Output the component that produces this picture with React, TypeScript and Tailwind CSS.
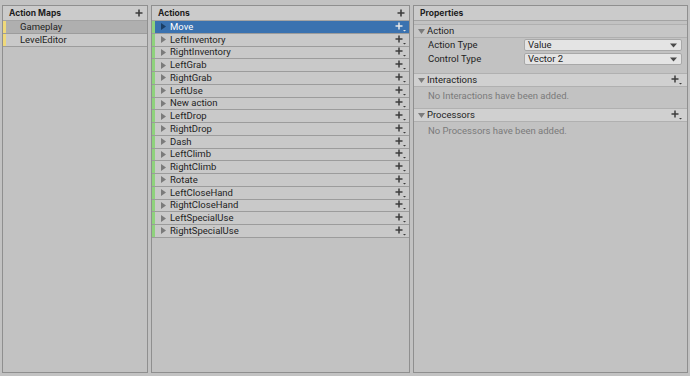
const actions = [
  'Move',
  'LeftInventory',
  'RightInventory',
  'LeftGrab',
  'RightGrab',
  'LeftUse',
  'New action',
  'LeftDrop',
  'RightDrop',
  'Dash',
  'LeftClimb',
  'RightClimb',
  'Rotate',
  'LeftCloseHand',
  'RightCloseHand',
  'LeftSpecialUse',
  'RightSpecialUse',
];

const Plus = ({ color = '#3c3c3c' }: { color?: string }) => (
  <svg width="9" height="9" viewBox="0 0 9 9">
    <path d="M4 0.5v7M0.5 4h7" stroke={color} strokeWidth="1.6" />
  </svg>
);

const PlusMore = ({ color = '#3c3c3c' }: { color?: string }) => (
  <svg width="11" height="10" viewBox="0 0 11 10">
    <path d="M4 0.5v7M0.5 4h7" stroke={color} strokeWidth="1.5" />
    <path d="M8 8h3l-1.5 1.6z" fill={color} />
  </svg>
);

const Arrow = ({ open, color = '#7b7b7b' }: { open?: boolean; color?: string }) => (
  <svg width="7" height="7" viewBox="0 0 7 7">
    {open ? <path d="M0 1h7L3.5 6z" fill={color} /> : <path d="M1 0v7l5-3.5z" fill={color} />}
  </svg>
);

const Caret = () => (
  <svg width="7" height="5" viewBox="0 0 7 5">
    <path d="M0 0.5h7L3.5 4.5z" fill="#4a4a4a" />
  </svg>
);

const PanelHeader = ({ title, plus }: { title: string; plus?: boolean }) => (
  <div className="flex h-[15px] items-center justify-between border-b border-[#a3a3a3] bg-[#cbcbcb] pl-[6px] pr-[3px]">
    <span className="font-['Inter'] text-[8.5px] font-bold text-[#1e1e1e]">{title}</span>
    {plus && <Plus />}
  </div>
);

const Section = ({ title, empty }: { title: string; empty: string }) => (
  <div className="mt-[3px]">
    <div className="flex h-[14px] items-center justify-between border-y border-[#b0b0b0] bg-[#d0d0d0] pl-[4px] pr-[5px]">
      <div className="flex items-center gap-[2px]">
        <Arrow open />
        <span className="text-[9.5px] text-[#1e1e1e]">{title}</span>
      </div>
      <PlusMore />
    </div>
    <div className="h-[18px] pl-[14px] pt-[2px] text-[9.5px] text-[#7a7a7a]">{empty}</div>
  </div>
);

export default function App() {
  return (
    <div
      className="flex h-[376px] w-[690px] gap-[3px] bg-[#c2c2c2] pb-[3px] pl-[2px] pr-[2px] pt-[5px]"
      style={{ fontFamily: 'Roboto, "Noto Sans", sans-serif' }}
    >
      <div className="flex w-[146px] flex-col border border-[#8f8f8f] bg-[#c2c2c2]">
        <PanelHeader title="Action Maps" plus />
        {['Gameplay', 'LevelEditor'].map((m, i) => (
          <div
            key={m}
            className={`flex h-[13px] items-center border-b border-[#9c9c9c] ${
              i === 0 ? 'bg-[#afafaf]' : 'bg-[#c9c9c9]'
            }`}
          >
            <div className="h-full w-[3px] bg-[#efd97a]" />
            <span className="pl-[14px] text-[9.5px] text-[#1e1e1e]">{m}</span>
          </div>
        ))}
      </div>

      <div className="flex w-[259px] flex-col border border-[#8f8f8f] bg-[#c2c2c2]">
        <PanelHeader title="Actions" plus />
        {actions.map((a, i) => {
          const sel = i === 0;
          return (
            <div
              key={a}
              className={`flex h-[12.75px] items-center border-b border-[#9c9c9c] pr-[3px] ${
                sel ? 'bg-[#3a72b0]' : 'bg-[#c9c9c9]'
              }`}
            >
              <div className="h-full w-[3px] bg-[#8fd27d]" />
              <div className="ml-[5px] flex w-[10px] items-center">
                <Arrow color={sel ? '#1b3f66' : '#7b7b7b'} />
              </div>
              <span className={`flex-1 text-[9.5px] ${sel ? 'text-white' : 'text-[#1e1e1e]'}`}>{a}</span>
              <PlusMore color={sel ? '#e8e8e8' : '#3c3c3c'} />
            </div>
          );
        })}
      </div>

      <div className="flex flex-1 flex-col border border-[#8f8f8f] bg-[#c2c2c2]">
        <PanelHeader title="Properties" />
        <div className="mt-[3px] flex h-[14px] items-center gap-[2px] border-y border-[#b0b0b0] bg-[#c6c6c6] pl-[4px]">
          <Arrow open />
          <span className="text-[9.5px] text-[#1e1e1e]">Action</span>
        </div>
        <div className="flex flex-col gap-[2px] pb-[5px] pl-[14px] pr-[5px] pt-[1px]">
          {[
            ['Action Type', 'Value'],
            ['Control Type', 'Vector 2'],
          ].map(([l, v]) => (
            <div key={l} className="flex h-[12px] items-center">
              <span className="w-[96px] text-[9.5px] text-[#1e1e1e]">{l}</span>
              <div className="flex h-[12px] flex-1 items-center justify-between rounded-[2px] border border-[#a8a8a8] bg-[#e4e4e4] pl-[3px] pr-[4px]">
                <span className="text-[9.5px] leading-none text-[#1e1e1e]">{v}</span>
                <Caret />
              </div>
            </div>
          ))}
        </div>
        <Section title="Interactions" empty="No Interactions have been added." />
        <Section title="Processors" empty="No Processors have been added." />
      </div>
    </div>
  );
}
